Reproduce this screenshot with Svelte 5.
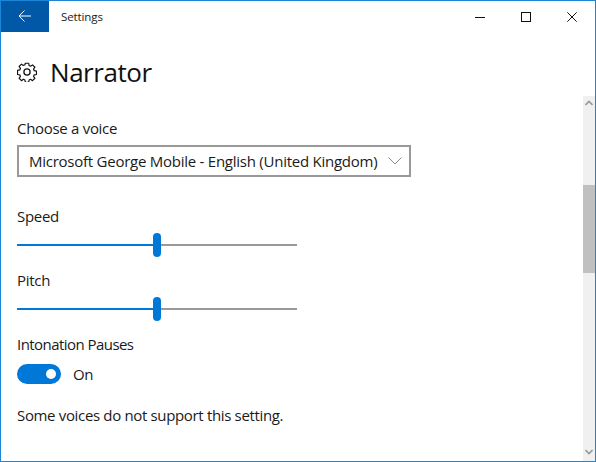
<script>
	let voice = 'Microsoft George Mobile - English (United Kingdom)';
	const sliders = [
		{ label: 'Speed', value: 50 },
		{ label: 'Pitch', value: 50 }
	];
</script>

<div class="window">
	<header class="titlebar">
		<button class="back" aria-label="Back">
			<svg width="13" height="12" viewBox="0 0 13 12"><path d="M1 6h12M6.5.5 1 6l5.5 5.5" fill="none" stroke="#fff" stroke-width="1"/></svg>
		</button>
		<span class="app-title">Settings</span>
		<div class="controls">
			<span class="control"><svg width="10" height="10" viewBox="0 0 10 10"><path d="M0 5.5h10" stroke="#111" stroke-width="1"/></svg></span>
			<span class="control"><svg width="10" height="10" viewBox="0 0 10 10"><rect x=".5" y=".5" width="9" height="9" fill="none" stroke="#111"/></svg></span>
			<span class="control"><svg width="10" height="10" viewBox="0 0 10 10"><path d="M.3.3l9.4 9.4M9.7.3.3 9.7" stroke="#111" stroke-width="1"/></svg></span>
		</div>
	</header>

	<div class="page-head">
		<svg class="gear" width="20" height="20" viewBox="0 0 20 20" fill="none" stroke="#111" stroke-width="1.25" stroke-linejoin="round">
			<circle cx="10" cy="10" r="3.1"/>
			<path d="M8.2.8h3.6l.4 2.4 1.6.7 2-1.4 2.5 2.5-1.4 2 .7 1.6 2.4.4v3.6l-2.4.4-.7 1.6 1.4 2-2.5 2.5-2-1.4-1.6.7-.4 2.4H8.2l-.4-2.4-1.6-.7-2 1.4-2.5-2.5 1.4-2-.7-1.6-2.4-.4V8.2l2.4-.4.7-1.6-1.4-2 2.5-2.5 2 1.4 1.6-.7z" transform="translate(.5 .5) scale(.95)"/>
		</svg>
		<h1>Narrator</h1>
	</div>

	<div class="body">
		<main class="content">
			<div class="label first">Choose a voice</div>
			<div class="select">
				<span>{voice}</span>
				<svg width="14" height="8" viewBox="0 0 14 8"><path d="M.5.5 7 7l6.5-6.5" fill="none" stroke="#888" stroke-width="1"/></svg>
			</div>

			{#each sliders as s}
				<div class="label slider-label">{s.label}</div>
				<div class="slider">
					<span class="fill" style="width: {s.value}%"></span>
					<span class="thumb"></span>
					<span class="rest"></span>
				</div>
			{/each}

			<div class="label toggle-label">Intonation Pauses</div>
			<div class="toggle-row">
				<span class="toggle"><span class="knob"></span></span>
				<span class="state">On</span>
			</div>
			<p class="note">Some voices do not support this setting.</p>
		</main>

		<div class="scrollbar">
			<svg class="arrow-up" width="8" height="6" viewBox="0 0 8 6"><path d="M.5 5 4 1.5 7.5 5" fill="none" stroke="#999" stroke-width="1.6"/></svg>
			<div class="thumb-v"></div>
			<svg class="arrow-down" width="8" height="6" viewBox="0 0 8 6"><path d="M.5 1 4 4.5 7.5 1" fill="none" stroke="#999" stroke-width="1.6"/></svg>
		</div>
	</div>
</div>

<style>
	:global(body) {
		margin: 0;
		background: #fff;
	}

	.window {
		width: 596px;
		height: 462px;
		box-sizing: border-box;
		border: 1px solid #1b86d8;
		display: flex;
		flex-direction: column;
		font-family: "Open Sans", "Noto Sans", sans-serif;
		color: #1a1a1a;
		overflow: hidden;
	}

	/* Title bar */
	.titlebar {
		height: 31px;
		display: flex;
		align-items: center;
		flex: none;
	}

	.back {
		width: 48px;
		height: 31px;
		border: 0;
		padding: 0 1px 2px 0;
		background: #0058a6;
		display: flex;
		align-items: center;
		justify-content: center;
	}

	.app-title {
		margin-left: 12px;
		font-size: 11.5px;
		letter-spacing: -0.1px;
	}

	.controls {
		margin-left: auto;
		display: flex;
	}

	.control {
		width: 46px;
		height: 31px;
		display: flex;
		align-items: center;
		justify-content: center;
	}

	/* Page heading */
	.page-head {
		height: 64px;
		flex: none;
		box-sizing: border-box;
		padding: 16px 0 0 16px;
		display: flex;
		align-items: center;
		gap: 13px;
	}

	.gear {
		flex: none;
	}

	h1 {
		margin: 0;
		font-size: 26px;
		font-weight: 400;
		line-height: 36px;
		letter-spacing: -0.45px;
		color: #111;
	}

	.body {
		flex: 1;
		display: flex;
		min-height: 0;
	}

	.content {
		flex: 1;
		padding-left: 16px;
	}

	.label {
		font-size: 15px;
		line-height: 20px;
		letter-spacing: -0.3px;
	}

	.first {
		margin-top: 22px;
	}

	.select {
		margin-top: 7px;
		width: 394px;
		height: 32px;
		box-sizing: border-box;
		border: 2px solid #999;
		display: flex;
		align-items: center;
		justify-content: space-between;
		padding: 0 7px 1px 10px;
		font-size: 15px;
		letter-spacing: -0.25px;
		white-space: nowrap;
	}

	.slider-label {
		margin-top: 29px;
	}

	.slider + .slider-label {
		margin-top: 13px;
	}

	.slider {
		margin-top: 7px;
		width: 280px;
		height: 24px;
		display: flex;
		align-items: center;
	}

	.fill {
		height: 2px;
		background: #0078d7;
		flex: none;
	}

	.thumb {
		width: 8px;
		height: 24px;
		border-radius: 4px;
		background: #0078d7;
		flex: none;
		margin-left: -4px;
	}

	.rest {
		flex: 1;
		height: 2px;
		background: #999;
	}

	.toggle-label {
		margin-top: 13px;
		letter-spacing: -0.55px;
	}

	.toggle-row {
		margin-top: 10px;
		height: 20px;
		display: flex;
		align-items: center;
		gap: 12px;
	}

	.toggle {
		width: 44px;
		height: 20px;
		border-radius: 10px;
		background: #0078d7;
		display: flex;
		align-items: center;
		justify-content: flex-end;
		padding-right: 5px;
		box-sizing: border-box;
	}

	.knob {
		width: 10px;
		height: 10px;
		border-radius: 50%;
		background: #fff;
	}

	.state {
		font-size: 15px;
		letter-spacing: -0.3px;
		padding-bottom: 1px;
	}

	.note {
		margin: 21px 0 0;
		font-size: 15px;
		line-height: 20px;
		letter-spacing: -0.34px;
	}

	/* Scrollbar */
	.scrollbar {
		width: 12px;
		flex: none;
		background: #f0f0f0;
		display: flex;
		flex-direction: column;
		align-items: center;
		padding: 4px 0 6px;
		box-sizing: border-box;
	}

	.arrow-up {
		flex: none;
	}

	.thumb-v {
		width: 12px;
		height: 88px;
		margin-top: 79px;
		background: #c0c0c0;
	}

	.arrow-down {
		margin-top: auto;
	}
</style>
